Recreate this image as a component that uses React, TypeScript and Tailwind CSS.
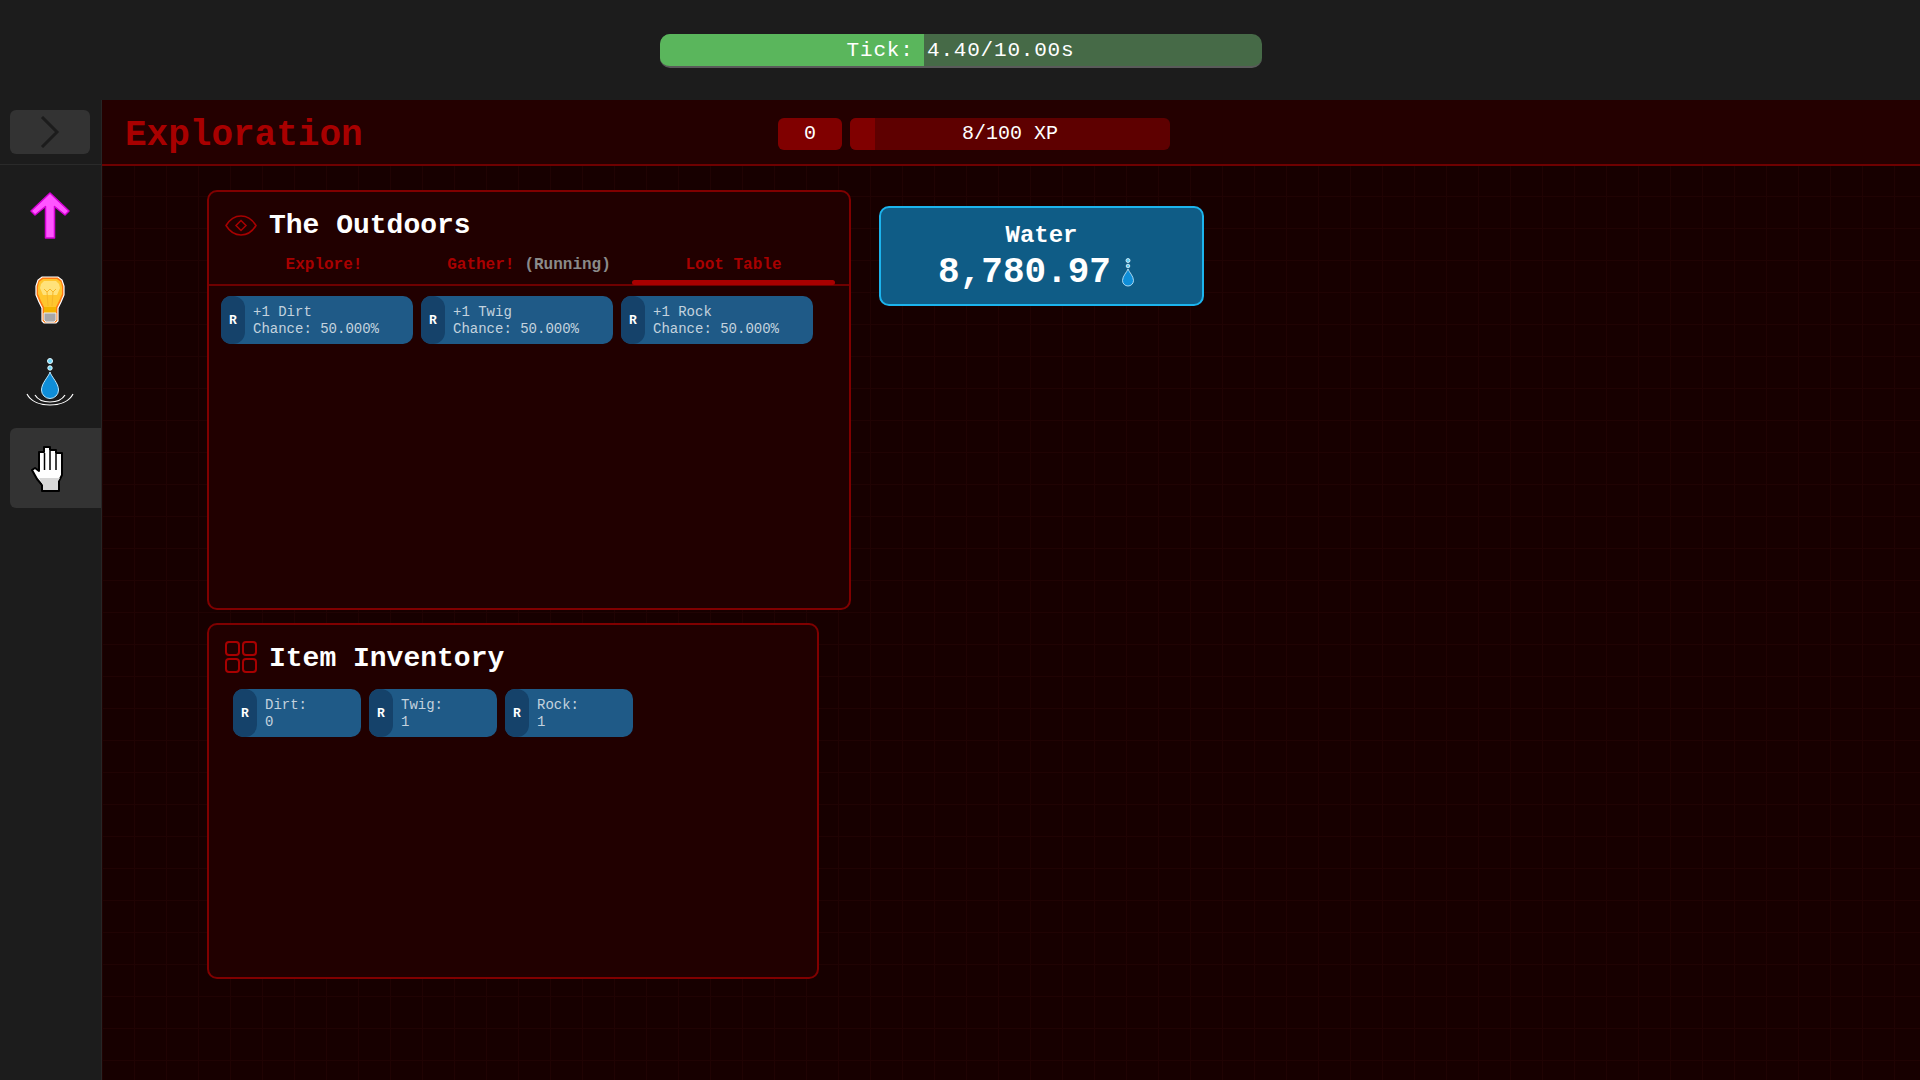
const mono = "font-['Liberation_Mono','DejaVu_Sans_Mono',monospace]";

function ArrowIcon() {
  return (
    <svg width="40" height="47" viewBox="0 0 40 47">
      <path d="M20 1 L39 19 L35 23 L24.500 14.500 V46 H15.500 V14.500 L5 23 L1 19 Z" fill="#ff55ff" stroke="#d400d4" strokeWidth="1.500" strokeLinejoin="round" />
    </svg>
  );
}

function BulbIcon() {
  return (
    <svg width="30" height="48" viewBox="0 0 30 48">
      <path d="M7 1h16l4 3 2 6v9l-3 7-3 6v13l-2 2H9l-2-2V32l-3-6-3-7v-9l2-6z" fill="#ff7a10" stroke="#fff" strokeWidth="1.200" />
      <path d="M8 3h14l4 3 1 5v7l-3 7-3 6H9l-3-6-3-7v-7l1-5z" fill="#ffc62e" />
      <path d="M9 5h12l3 3 1 4-3 7H8l-3-7 1-4z" fill="#ffe27a" />
      <path d="M9 13l3 3 3-3 3 3 3-3M12 16l1 14M18 16l-1 14" stroke="#f6b62a" strokeWidth="1" fill="none" />
      <path d="M9 31h12v6H9z" fill="#f4b400" />
      <path d="M9 37h12v7l-2 2h-8l-2-2z" fill="#a8a8a8" stroke="#eee" strokeWidth="1" />
    </svg>
  );
}

function DropIcon({ small }: { small?: boolean }) {
  if (small) {
    return (
      <svg width="14" height="30" viewBox="0 0 14 30">
        <circle cx="7" cy="2.500" r="2" fill="#5fd0f5" stroke="#e8f8ff" strokeWidth="0.800" />
        <circle cx="7" cy="8" r="1.800" fill="#5fd0f5" stroke="#e8f8ff" strokeWidth="0.800" />
        <path d="M7 11c1 3 5.500 7 5.500 11.500a5.500 5.500 0 0 1-11 0C1.500 18 6 14 7 11z" fill="#0f8ed8" stroke="#cfefff" strokeWidth="0.800" />
      </svg>
    );
  }
  return (
    <svg width="48" height="50" viewBox="0 0 48 50" fill="none">
      <circle cx="24" cy="3" r="2.500" fill="#6fd6f7" stroke="#e6f8ff" />
      <circle cx="24" cy="10" r="2.200" fill="#6fd6f7" stroke="#e6f8ff" />
      <path d="M24 14c1.500 5 8.500 11 8.500 18a8.500 8.500 0 0 1-17 0c0-7 7-13 8.500-18z" fill="#0f8ed8" stroke="#bfeaff" strokeWidth="1" />
      <path d="M1 36c4 8 14 11 23 11s19-3 23-11" stroke="#fff" strokeWidth="1.200" />
      <path d="M9 37c3 5 9 7 15 7s12-2 15-7" stroke="#fff" strokeWidth="1.200" />
    </svg>
  );
}

function HandIcon() {
  return (
    <svg width="33" height="47" viewBox="0 0 33 47">
      <path d="M1 25 L4 23 L8 26 V7 H13 V2 H19 V5 H25 V8 H31 V30 L28 36 V46 H11 V40 L6 34 Z" fill="#fff" stroke="#000" strokeWidth="2" strokeLinejoin="round" />
      <path d="M8 33h21l-2 3v9H12v-5z" fill="#d8d8d8" />
      <path d="M13.500 8v17M19 6v19M25 9v16" stroke="#000" strokeWidth="1.500" />
    </svg>
  );
}

function EyeIcon() {
  return (
    <svg width="32" height="21" viewBox="0 0 32 21" fill="none" stroke="#a80000" strokeWidth="1.500">
      <path d="M1 10.500C5 4 10 1 16 1s11 3 15 9.500c-4 6.500-9 9.500-15 9.500S5 17 1 10.500z" />
      <path d="M16 5.500l5 5-5 5-5-5z" />
    </svg>
  );
}

function GridIcon() {
  return (
    <svg width="32" height="32" viewBox="0 0 32 32" fill="none" stroke="#a80000" strokeWidth="2">
      <rect x="1" y="1" width="13" height="13" rx="3" />
      <rect x="18" y="1" width="13" height="13" rx="3" />
      <rect x="1" y="18" width="13" height="13" rx="3" />
      <rect x="18" y="18" width="13" height="13" rx="3" />
    </svg>
  );
}

function Chip({ lines, width }: { lines: string[]; width: string }) {
  return (
    <div className={`flex h-12 items-stretch overflow-hidden rounded-[10px] bg-[#1f5a87] ${width}`}>
      <div className="flex w-6 shrink-0 items-center justify-center rounded-r-[12px] bg-[#15426a] pt-[1px] text-[13px] font-bold text-white">R</div>
      <div className="flex flex-col justify-center pl-2 pt-[1px] text-[14px] leading-[16.500px] text-[#c3d2de]">
        {lines.map(l => <div key={l} className="whitespace-pre">{l}</div>)}
      </div>
    </div>
  );
}

export default function App() {
  return (
    <div className={`${mono} flex h-[1080px] w-[1920px] flex-col overflow-hidden bg-[#1c1c1c]`}>
      {/* tick bar */}
      <div className="flex h-[100px] shrink-0 items-start justify-center pl-[1px] pt-[34px]">
        <div className="relative h-[34px] w-[602px] overflow-hidden rounded-[10px] border-b-2 border-[#5a5a5a] bg-[#466a47]">
          <div className="absolute inset-y-0 left-0 w-[264px] bg-[#5ab65c]" />
          <div className="relative flex h-full items-center justify-center pt-[1px] text-[21px] tracking-[0.8px] text-white">Tick: 4.40/10.00s</div>
        </div>
      </div>

      <div className="flex min-h-0 flex-1">
        {/* sidebar */}
        <div className="flex w-[102px] shrink-0 flex-col border-r border-[#262626]">
          <div className="flex h-[65px] shrink-0 items-start border-b border-[#2a2a2a] pl-[10px] pt-[10px]">
            <div className="flex h-[44px] w-[80px] items-center justify-center rounded-[6px] bg-[#333333]">
              <svg width="20" height="32" viewBox="0 0 20 32" fill="none" stroke="#1c1c1c" strokeWidth="3"><path d="M2 1l15 15L2 31" /></svg>
            </div>
          </div>
          <div className="flex flex-col pl-[10px]">
            <div className="flex h-[86px] w-[91px] items-center justify-center pr-[11px] pt-[15px]"><ArrowIcon /></div>
            <div className="flex h-[84px] w-[91px] items-center justify-center pr-[12px] pt-[14px]"><BulbIcon /></div>
            <div className="flex h-[93px] w-[91px] items-center justify-center pr-[12px] pt-[2px]"><DropIcon /></div>
            <div className="flex h-[80px] w-[91px] items-center justify-center rounded-l-[6px] bg-[#333333] pr-[17px]"><HandIcon /></div>
          </div>
        </div>

        {/* main */}
        <div className="flex min-w-0 flex-1 flex-col bg-[#170000] bg-[linear-gradient(#200303_1px,transparent_1px),linear-gradient(90deg,#200303_1px,transparent_1px)] bg-[size:32px_32px]">
          <div className="flex h-[66px] shrink-0 items-center border-b-2 border-[#6e0000] bg-[#240000] pl-[23px]">
            <div className="w-[653px] pt-[8px] text-[36px] font-bold leading-none text-[#a80000]">Exploration</div>
            <div className="flex items-center gap-2 pt-[3px]">
              <div className="flex h-[32px] w-[64px] items-center justify-center rounded-[6px] bg-[#800000] pt-[1px] text-[20px] text-white">0</div>
              <div className="relative h-[32px] w-[320px] overflow-hidden rounded-[6px] bg-[#5e0000]">
                <div className="absolute inset-y-0 left-0 w-[25px] bg-[#800000]" />
                <div className="relative flex h-full items-center justify-center pt-[1px] text-[20px] text-white">8/100 XP</div>
              </div>
            </div>
          </div>

          <div className="flex items-start pl-[105px] pt-[24px]">
            <div className="flex w-[644px] flex-col gap-[13px]">
              <div className="flex h-[420px] flex-col rounded-[10px] border-2 border-[#800000] bg-[#210000]">
                <div className="flex h-[53px] items-center gap-[12px] pl-[16px] pt-[14px]">
                  <EyeIcon />
                  <div className="text-[28px] font-bold leading-none text-white">The Outdoors</div>
                </div>
                <div className="flex h-[41px] border-b-2 border-[#6e0000] pt-[1px] text-[16px] font-bold">
                  <div className="flex w-[210px] items-center justify-center pl-[20px] text-[#a80000]">Explore!</div>
                  <div className="flex w-[210px] items-center justify-center pl-[10px] text-[#a80000]">Gather!<span className="ml-[10px] text-[#8a8a8a]">(Running)</span></div>
                  <div className="ml-[3px] flex w-[203px] items-center justify-center text-[#a80000]">
                    <div className="relative flex h-full w-[203px] items-center justify-center">Loot Table
                      <div className="absolute bottom-[-1px] left-0 right-0 h-[5px] rounded-full bg-[#a80000]" />
                    </div>
                  </div>
                </div>
                <div className="flex gap-2 pl-[12px] pt-[10px]">
                  <Chip width="w-[192px]" lines={["+1 Dirt", "Chance: 50.000%"]} />
                  <Chip width="w-[192px]" lines={["+1 Twig", "Chance: 50.000%"]} />
                  <Chip width="w-[192px]" lines={["+1 Rock", "Chance: 50.000%"]} />
                </div>
              </div>

              <div className="flex h-[356px] w-[612px] flex-col rounded-[10px] border-2 border-[#800000] bg-[#210000]">
                <div className="flex h-[53px] items-center gap-[12px] pl-[16px] pt-[14px]">
                  <div className="-mt-[3px]"><GridIcon /></div>
                  <div className="text-[28px] font-bold leading-none text-white">Item Inventory</div>
                </div>
                <div className="flex gap-2 pl-[24px] pt-[11px]">
                  <Chip width="w-[128px]" lines={["Dirt:", "0"]} />
                  <Chip width="w-[128px]" lines={["Twig:", "1"]} />
                  <Chip width="w-[128px]" lines={["Rock:", "1"]} />
                </div>
              </div>
            </div>

            <div className="ml-[28px] mt-[16px] flex h-[100px] w-[325px] flex-col items-center justify-center rounded-[10px] border-2 border-[#1cb4ee] bg-[#0f5c86] pt-[2px] text-white">
              <div className="text-[24px] font-bold leading-[32px]">Water</div>
              <div className="flex items-center gap-[10px] pr-[10px]">
                <span className="text-[36px] font-bold leading-[42px]">8,780.97</span>
                <DropIcon small />
              </div>
            </div>
          </div>
        </div>
      </div>
    </div>
  );
}
